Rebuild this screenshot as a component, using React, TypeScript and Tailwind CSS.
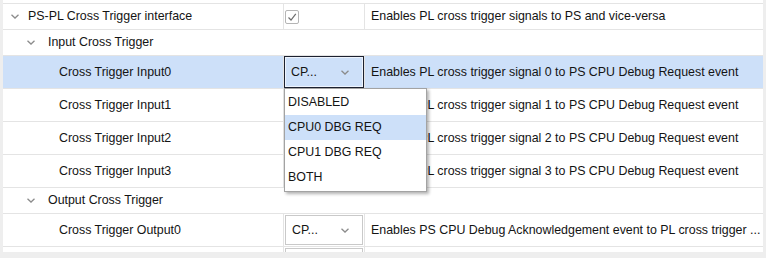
import React from 'react'

type Row =
  | { kind: 'section'; level: number; label: string; h: string }
  | { kind: 'prop'; level: number; label: string; h: string; value: 'check' | 'combo'; desc: string; selected?: boolean }

const rows: Row[] = [
  { kind: 'prop', level: 0, label: 'PS-PL Cross Trigger interface', h: 'h-[26px]', value: 'check', desc: 'Enables PL cross trigger signals to PS and vice-versa' },
  { kind: 'section', level: 1, label: 'Input Cross Trigger', h: 'h-[26px]' },
  { kind: 'prop', level: 2, label: 'Cross Trigger Input0', h: 'h-[33px]', value: 'combo', desc: 'Enables PL cross trigger signal 0 to PS CPU Debug Request event', selected: true },
  { kind: 'prop', level: 2, label: 'Cross Trigger Input1', h: 'h-[33px]', value: 'combo', desc: 'Enables PL cross trigger signal 1 to PS CPU Debug Request event' },
  { kind: 'prop', level: 2, label: 'Cross Trigger Input2', h: 'h-[33px]', value: 'combo', desc: 'Enables PL cross trigger signal 2 to PS CPU Debug Request event' },
  { kind: 'prop', level: 2, label: 'Cross Trigger Input3', h: 'h-[33px]', value: 'combo', desc: 'Enables PL cross trigger signal 3 to PS CPU Debug Request event' },
  { kind: 'section', level: 1, label: 'Output Cross Trigger', h: 'h-[26px]' },
  { kind: 'prop', level: 2, label: 'Cross Trigger Output0', h: 'h-[33px]', value: 'combo', desc: 'Enables PS CPU Debug Acknowledgement event to PL cross trigger ...' },
]

const options = ['DISABLED', 'CPU0 DBG REQ', 'CPU1 DBG REQ', 'BOTH']

function Chevron({ className }: { className?: string }) {
  return (
    <svg className={className} width="8" height="5" viewBox="0 0 8 5" fill="none">
      <path d="M0.5 0.8 L4 4 L7.5 0.8" stroke="#8c8c8c" strokeWidth="1.3" />
    </svg>
  )
}

function Combo({ selected }: { selected?: boolean }) {
  if (selected) {
    return (
      <div className="h-full w-full border border-[#1c2130] bg-[#cde0f9]">
        <div className="flex h-full items-center justify-between border border-[#eef4fd] pl-[5px] pr-[13px]">
          <span>CP...</span>
          <Chevron />
        </div>
      </div>
    )
  }
  return (
    <div className="flex h-full w-full items-center justify-between border border-[#c9c9c9] bg-white pl-[6px] pr-[13px]">
      <span>CP...</span>
      <Chevron />
    </div>
  )
}

function Checkbox() {
  return (
    <div className="ml-px flex h-[14px] w-[14px] items-center justify-center rounded-[2px] border border-[#b5b5b5] bg-white">
      <svg width="10" height="10" viewBox="0 0 10 10" fill="none">
        <path d="M1.5 5.5 L4 8 L8.8 1.8" stroke="#6e6e6e" strokeWidth="1.2" />
      </svg>
    </div>
  )
}

function Label({ level, label, expandable }: { level: number; label: string; expandable?: boolean }) {
  if (level === 0) {
    return (
      <div className="flex items-center">
        <Chevron className="ml-[8px] mr-[9px]" />
        <span>{label}</span>
      </div>
    )
  }
  if (level === 1 && expandable) {
    return (
      <div className="flex items-center">
        <Chevron className="ml-[24px] mr-[13px]" />
        <span>{label}</span>
      </div>
    )
  }
  return <span className="pl-[56px]">{label}</span>
}

export default function App() {
  return (
    <div
      className="h-[258px] w-[766px] overflow-hidden bg-[#eeeeee] pb-[6px] pl-[3px] pr-[3px] text-[12.4px] text-[#141414]"
      style={{ fontFamily: '"Liberation Sans", Arial, sans-serif' }}
    >
      <div className="relative h-[252px] w-[760px] overflow-hidden bg-white">
        <div className="h-[4px] border-b border-[#e4e4e4]" />
        {rows.map((r, i) => {
          if (r.kind === 'section') {
            return (
              <div key={i} className={`flex items-center border-b border-[#e4e4e4] ${r.h}`}>
                <Label level={r.level} label={r.label} expandable />
              </div>
            )
          }
          return (
            <div
              key={i}
              className={`flex border-b border-[#e4e4e4] ${r.h} ${r.selected ? 'bg-[#cde0f9]' : ''}`}
            >
              <div className="flex w-[281px] shrink-0 items-center border-r border-[#e4e4e4]">
                <Label level={r.level} label={r.label} />
              </div>
              <div className={`flex w-[81px] shrink-0 items-center border-r border-[#e4e4e4] ${r.value === 'combo' ? (r.selected ? 'py-0' : 'p-px') : ''}`}>
                {r.value === 'check' ? <Checkbox /> : <Combo selected={r.selected} />}
              </div>
              <div className="flex min-w-0 flex-1 items-center overflow-hidden pl-[6px]">
                <span className="whitespace-nowrap">{r.desc}</span>
              </div>
            </div>
          )
        })}

        {/* next row, only its top edge is in view */}
        <div className="flex h-[6px]">
          <div className="w-[281px] shrink-0 border-r border-[#e4e4e4]" />
          <div className="w-[81px] shrink-0 border-r border-[#e4e4e4] px-px pt-px">
            <div className="h-[10px] border border-[#c9c9c9] bg-white" />
          </div>
          <div className="flex-1" />
        </div>

        <div className="absolute left-[281px] top-[88px] w-[143px] border border-[#a3a3a3] bg-white py-px shadow-[2px_2px_3px_rgba(0,0,0,0.3)]">
          {options.map((o) => (
            <div
              key={o}
              className={`flex h-[25px] items-center pl-[3px] ${o === 'CPU0 DBG REQ' ? 'bg-[#cde0f9]' : ''}`}
            >
              {o}
            </div>
          ))}
        </div>
      </div>
    </div>
  )
}
